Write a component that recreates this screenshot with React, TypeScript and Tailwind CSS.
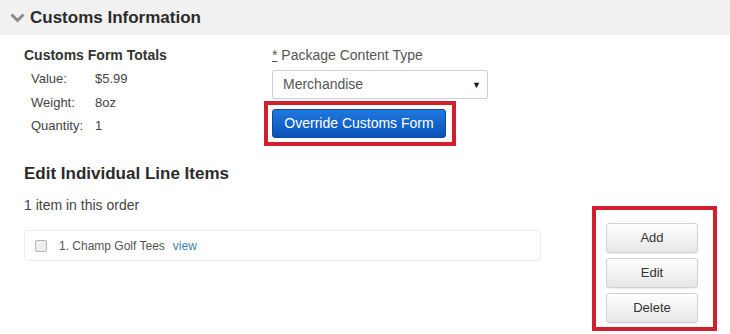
import React from 'react';

const totals = [
  { label: 'Value:', value: '$5.99' },
  { label: 'Weight:', value: '8oz' },
  { label: 'Quantity:', value: '1' },
];

const GrayButton: React.FC<{ label: string }> = ({ label }) => (
  <button className="h-[30px] w-[92px] rounded-[3px] border border-[#d2d2d2] bg-gradient-to-b from-[#ffffff] to-[#e6e6e6] text-[13px] text-[#333] shadow-[0_1px_1px_rgba(0,0,0,0.08)]">
    {label}
  </button>
);

const App: React.FC = () => {
  return (
    <div className="h-[334px] w-[730px] overflow-hidden bg-white font-['Liberation_Sans',Arial,sans-serif] text-[#333]">
      {/* Header */}
      <div className="flex h-[35px] items-center bg-[#f1f1f1] pl-[10px]">
        <svg width="15" height="10" viewBox="0 0 15 10" className="mr-[5px] mt-[1px]">
          <polyline points="1.5,1.5 7.5,7.5 13.5,1.5" fill="none" stroke="#8a8a8a" strokeWidth="3" />
        </svg>
        <h2 className="text-[17px] font-bold text-[#2b2b2b]">Customs Information</h2>
      </div>

      {/* Totals + content type */}
      <div className="flex pl-[24px] pt-[12px]">
        <div className="w-[248px]">
          <div className="text-[14px] font-bold leading-[16px] text-[#333]">Customs Form Totals</div>
          <div className="mt-[4px] pl-[7px]">
            {totals.map((t) => (
              <div key={t.label} className="flex h-[23.5px] items-center text-[13px] text-[#444]">
                <span className="w-[64px]">{t.label}</span>
                <span>{t.value}</span>
              </div>
            ))}
          </div>
        </div>
        <div className="w-[216px]">
          <div className="text-[14px] leading-[16px] text-[#555]">
            <span className="underline">*</span> Package Content Type
          </div>
          <div className="relative mt-[7px] flex h-[29px] w-[216px] items-center rounded-[2px] border border-[#cfcfcf] bg-white pl-[10px] text-[14px] text-[#555]">
            Merchandise
            <span className="absolute right-[6px] top-[8px] text-[9px] text-[#111]">▼</span>
          </div>
          <div className="-ml-[8px] mt-[2px] inline-block border-4 border-[#d0202e] py-[4px] pl-[4px] pr-[6px]">
            <button className="h-[29px] w-[174px] rounded-[3px] border border-[#0b4a9e] bg-gradient-to-b from-[#1f78de] to-[#0a52b8] text-[14px] text-white">
              Override Customs Form
            </button>
          </div>
        </div>
      </div>

      {/* Line items */}
      <div className="pl-[24px] pt-[18px]">
        <h3 className="text-[17px] font-bold leading-[20px] text-[#2b2b2b]">Edit Individual Line Items</h3>
        <div className="flex">
          <div className="w-[517px] pt-[13px]">
            <div className="text-[14px] leading-[16px] text-[#444]">1 item in this order</div>
            <div className="mt-[17px] flex h-[31px] items-center rounded-[4px] border border-[#ececec] pl-[10px] text-[12px]">
              <span className="mr-[12px] h-[12px] w-[12px] rounded-[2px] border border-[#b5b5b5] bg-[#eeeeee]" />
              <span className="text-[#555]">1. Champ Golf Tees</span>
              <span className="ml-[8px] text-[#3d7fb8]">view</span>
            </div>
          </div>
          <div className="ml-[51px] mt-[22px] flex h-[125px] w-[125px] flex-col gap-[5px] border-4 border-[#d0202e] pb-[4px] pl-[10px] pt-[13px]">
            <GrayButton label="Add" />
            <GrayButton label="Edit" />
            <GrayButton label="Delete" />
          </div>
        </div>
      </div>
    </div>
  );
};

export default App;
